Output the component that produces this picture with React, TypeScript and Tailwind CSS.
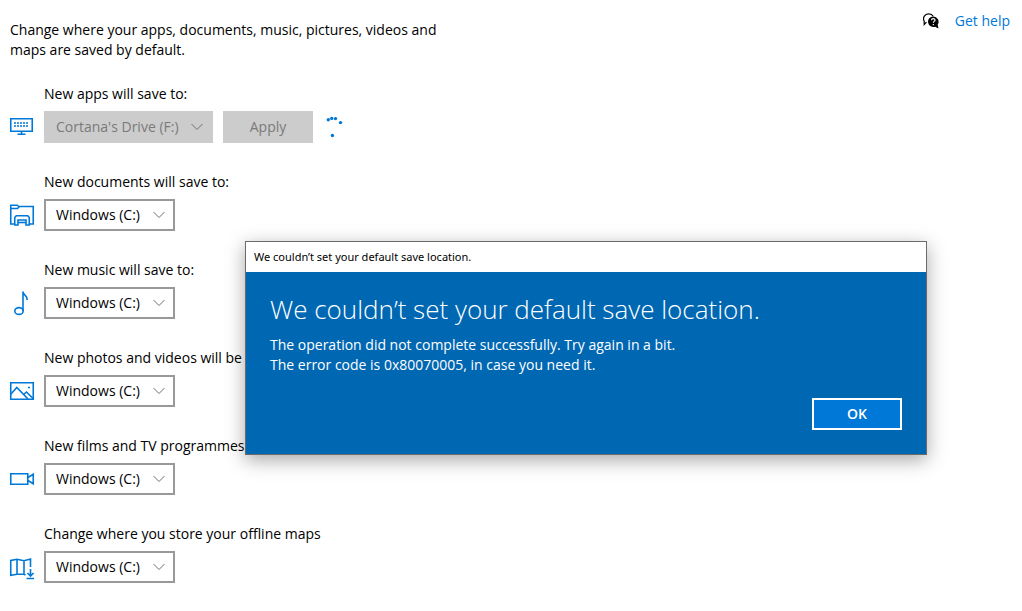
import type { ReactNode } from 'react';

function Icon({ children }: { children: ReactNode }) {
  return (
    <svg
      className="h-6 w-6 shrink-0 overflow-visible text-[#0078d7]"
      viewBox="0 0 24 24"
      fill="none"
      stroke="currentColor"
      strokeWidth="1.6"
      aria-hidden="true"
    >
      {children}
    </svg>
  );
}

const AppsIcon = (
  <Icon>
    <path d="M.75 3.75h21.5v12.5H.75zM11.5 16v3M7.5 19.25h8" />
    <path d="M4 8h14M4 11h14" strokeDasharray="2 1" />
  </Icon>
);

const DocumentsIcon = (
  <Icon>
    <path d="M5 21H.75V2.25h6.5l1.5 1.25h14.5V21H19M1 5.5h6.5l2-2" />
    <path d="M4.75 22v-7.5l1.5-1.75h11.5l1.5 1.75V22H16v-5H8v5z" />
    <path d="M8 19.5h8" />
  </Icon>
);

const MusicIcon = (
  <Icon>
    <ellipse cx="9" cy="20" rx="4.2" ry="3.4" />
    <path d="M13 20V.5c0 4 4.5 3.5 4.200 8.500" />
  </Icon>
);

const PhotosIcon = (
  <Icon>
    <path d="M.75 3.75h22.5v16.5H.75z" />
    <path d="M1 15l5.800-6.500L18 20M13.500 15.500l3-2.500 6.500 6.500" />
    <path d="M18 8.500h2" />
  </Icon>
);

const FilmsIcon = (
  <Icon>
    <path d="M.75 6.75h17v10.500h-17zM18 10.500l5.250-3.250v9.500L18 13.500" />
  </Icon>
);

const MapsIcon = (
  <Icon>
    <path d="M15.500 20l-1.500-.8-7 .1-6.250 1V5.500L7 4.250l7 1.500 6.500-1.750v8M7 4.250V19M14 5.750V19" />
    <path d="M20.500 14v7M17.500 18l3 3 3-3M16.500 23.500H24" />
  </Icon>
);

function Chevron() {
  return (
    <svg
      className="pointer-events-none absolute right-2 top-1/2 h-4 w-4 -translate-y-1/2 text-[#707070]"
      viewBox="0 0 16 16"
      fill="none"
      stroke="currentColor"
      aria-hidden="true"
    >
      <path d="M2.500 5l5.500 5.500L13.500 5" />
    </svg>
  );
}

function Spinner() {
  return (
    <svg
      className="ml-3 h-6 w-5 text-[#0078d7]"
      viewBox="0 0 20 24"
      fill="currentColor"
      role="img"
      aria-label="Applying"
    >
      <circle cx="3.3" cy="4.7" r="1.7" />
      <circle cx="6.7" cy="3.4" r="1.7" />
      <circle cx="10.5" cy="3.6" r="1.7" />
      <circle cx="15.5" cy="7.6" r="1.7" />
      <circle cx="7.4" cy="20.5" r="1.7" />
    </svg>
  );
}

function HelpIcon() {
  return (
    <svg className="h-4 w-4" viewBox="0 0 16 16" fill="none" aria-hidden="true">
      <path
        d="M3.500 9.200L1.200 11.500V8.200A4.900 4.900 0 0 1 5.800.9c2 0 3.600 1 4.400 2.400"
        stroke="#000"
        strokeWidth="1.2"
      />
      <path
        d="M10.200 3.400a5.300 5.300 0 0 1 4.500 8.200l.8 4-3.400-1.900a5.300 5.300 0 1 1-1.900-10.300z"
        fill="#000"
      />
      <path
        d="M8.500 7.300c0-2.200 3.500-2.200 3.500-.2 0 1.300-1.700 1.300-1.700 2.700M10.300 10.900v1.300"
        stroke="#fff"
        strokeWidth="1.2"
      />
    </svg>
  );
}

type Setting = {
  id: string;
  label: string;
  value: string;
  icon: ReactNode;
  applying?: boolean;
};

const settings: Setting[] = [
  { id: 'apps', label: 'New apps will save to:', value: "Cortana's Drive (F:)", icon: AppsIcon, applying: true },
  { id: 'documents', label: 'New documents will save to:', value: 'Windows (C:)', icon: DocumentsIcon },
  { id: 'music', label: 'New music will save to:', value: 'Windows (C:)', icon: MusicIcon },
  { id: 'photos', label: 'New photos and videos will be saved to:', value: 'Windows (C:)', icon: PhotosIcon },
  { id: 'films', label: 'New films and TV programmes will save to:', value: 'Windows (C:)', icon: FilmsIcon },
  { id: 'maps', label: 'Change where you store your offline maps', value: 'Windows (C:)', icon: MapsIcon },
];

function SettingRow({ id, label, value, icon, applying }: Setting) {
  return (
    <div>
      <label htmlFor={id} className="mb-[7px] ml-[34px] block">
        {label}
      </label>
      <div className="flex items-center">
        {icon}
        <div className="relative ml-[10px]">
          <select
            id={id}
            disabled={applying}
            defaultValue={value}
            className={
              applying
                ? 'block h-8 w-[169px] appearance-none bg-[#cccccc] pl-3 pr-7 text-[#7a7a7a] opacity-100'
                : 'block h-8 w-[131px] appearance-none border-2 border-[#999999] bg-white pl-[10px] pr-6 text-black'
            }
          >
            <option>{value}</option>
          </select>
          <Chevron />
        </div>
        {applying && (
          <>
            <button type="button" disabled className="ml-[10px] h-8 w-[90px] bg-[#cccccc] text-[#7a7a7a]">
              Apply
            </button>
            <Spinner />
          </>
        )}
      </div>
    </div>
  );
}

function ErrorDialog() {
  return (
    <div
      role="dialog"
      aria-labelledby="dialog-title"
      className="absolute left-[245px] top-[241px] w-[682px] border border-[#6b6b6b] bg-[#0067b3] text-white shadow-[0_5px_18px_rgba(0,0,0,0.35)]"
    >
      <div className="bg-white px-2 py-[5px] font-['Noto_Sans',sans-serif] text-[11px] leading-5 text-black">
        We couldn’t set your default save location.
      </div>
      <div className="px-6 pb-6 pt-[19px]">
        <h1 id="dialog-title" className="text-[26px] font-light leading-9">
          We couldn’t set your default save location.
        </h1>
        <p className="mt-2">
          The operation did not complete successfully. Try again in a bit.
          <br />
          The error code is 0x80070005, in case you need it.
        </p>
        <div className="mt-[23px] flex justify-end">
          <button type="button" className="h-8 w-[90px] border-2 border-white bg-[#0078d7] font-semibold">
            OK
          </button>
        </div>
      </div>
    </div>
  );
}

export default function App() {
  return (
    <div className="relative min-h-screen bg-white font-['Open_Sans','Noto_Sans',sans-serif] text-[14px] leading-5 text-black">
      <main className="pb-7 pl-[10px] pr-3">
        <header className="flex items-start justify-between">
          <p className="w-[450px] pt-5">
            Change where your apps, documents, music, pictures, videos and maps are saved by default.
          </p>
          <a href="#help" className="flex items-center gap-4 pt-[11px] text-[#0078d7]">
            <HelpIcon />
            Get help
          </a>
        </header>
        <form className="mt-6 flex flex-col gap-[29px]">
          {settings.map((setting) => (
            <SettingRow key={setting.id} {...setting} />
          ))}
        </form>
      </main>
      <ErrorDialog />
    </div>
  );
}
